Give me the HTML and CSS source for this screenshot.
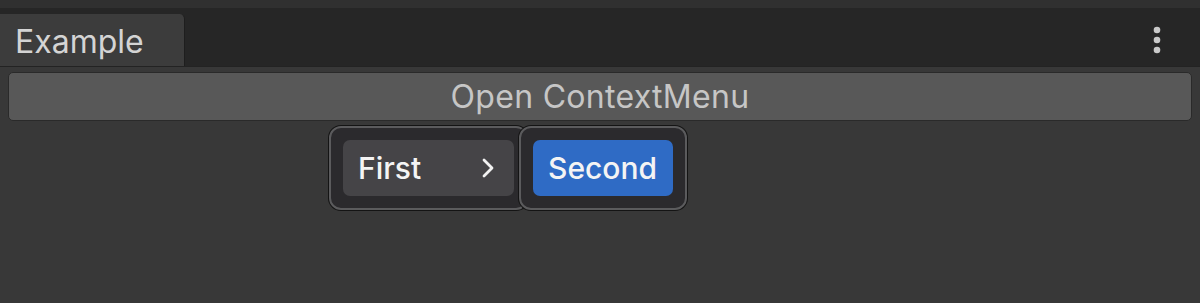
FILE: index.html
```html
<!DOCTYPE html>
<html lang="en">
<head>
    <meta charset="UTF-8">
    <meta name="viewport" content="width=device-width, initial-scale=1.0">
    <title>Example</title>
    <link rel="stylesheet" href="styles.css">
</head>
<body>
    <div class="top-strip"></div>
    <div class="tab-bar">
        <div class="tab">Example</div>
        <div class="tab-menu">
            <svg width="10" height="30" viewBox="0 0 10 30">
                <circle cx="5" cy="5" r="3.3" fill="#c9c9c9"/>
                <circle cx="5" cy="15" r="3.3" fill="#c9c9c9"/>
                <circle cx="5" cy="25" r="3.3" fill="#c9c9c9"/>
            </svg>
        </div>
    </div>
    <main class="content">
        <button class="open-btn">Open ContextMenu</button>
        <div class="menus">
            <div class="menu menu-first">
                <div class="item item-hover">
                    <span>First</span>
                    <svg class="chevron" width="16" height="24" viewBox="0 0 16 24">
                        <path d="M4 4 L12 12 L4 20" fill="none" stroke="#f2f2f2" stroke-width="2.8" stroke-linecap="round" stroke-linejoin="round"/>
                    </svg>
                </div>
            </div>
            <div class="menu menu-second">
                <div class="item item-selected">Second</div>
            </div>
        </div>
    </main>
</body>
</html>
```

FILE: styles.css
```css
/* General styles */
body {
    margin: 0;
    padding: 0;
    background-color: #383838;
    font-family: Inter, "Noto Sans", sans-serif;
    height: 303px;
    overflow: hidden;
}

.top-strip {
    height: 8px;
    background-color: #303030;
}

/* Tab bar */
.tab-bar {
    display: flex;
    justify-content: space-between;
    align-items: flex-end;
    height: 58px;
    background-color: #262626;
    border-bottom: 1px solid #232323;
}

.tab {
    width: 185px;
    height: 52px;
    box-sizing: border-box;
    padding: 8px 0 0 15px;
    background-color: #3c3c3c;
    border-top-right-radius: 5px;
    border-right: 1px solid #1e1e1e;
    color: #d4d4d4;
    font-size: 32px;
    line-height: 40px;
}

.tab-menu {
    align-self: flex-start;
    padding: 17px 38px 0 0;
}

/* Content */
.content {
    padding: 5px 8px 0;
}

.open-btn {
    display: block;
    width: 100%;
    height: 49px;
    background-color: #585858;
    border: 1px solid #2a2a2a;
    border-radius: 5px;
    color: #c6c6c6;
    font-family: Inter, "Noto Sans", sans-serif;
    font-size: 32px;
    letter-spacing: 0.3px;
    padding: 0;
}

/* Context menus */
.menus {
    display: flex;
    padding-left: 321px;
    margin-top: 5px;
}

.menu {
    box-sizing: border-box;
    height: 84px;
    padding: 12px;
    background-color: #2b2a2d;
    border: 2px solid #5b5b5d;
    border-radius: 12px;
    box-shadow: 0 0 0 1px #141414;
}

.menu-first {
    width: 199px;
}

.menu-second {
    width: 168px;
    margin-left: -9px;
}

.item {
    display: flex;
    align-items: center;
    height: 56px;
    box-sizing: border-box;
    padding: 0 15px;
    border-radius: 7px;
    color: #f4f4f4;
    font-size: 30px;
    font-weight: 500;
}

.item-hover {
    justify-content: space-between;
    background-color: #454447;
    padding-right: 18px;
}

.item-selected {
    background-color: #2f6bc5;
}
```
